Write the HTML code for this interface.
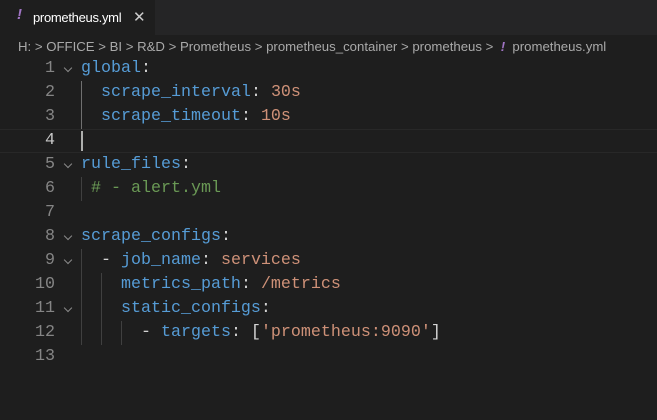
<!DOCTYPE html>
<html><head><style>
body{margin:0;width:657px;height:420px;background:#1e1e1e;overflow:hidden;font-family:"Liberation Sans",sans-serif;position:relative}
.tabbar{position:absolute;left:0;top:0;width:657px;height:35px;background:#252526}
.tab{position:absolute;left:0;top:0;width:155px;height:35px;background:#1e1e1e;color:#fff;font-size:13px}
.bc{position:absolute;left:18px;top:37px;height:20px;line-height:20px;font-size:13.2px;color:#a9a9a9;white-space:pre}
.ln{position:absolute;left:0;width:55px;text-align:right;font-family:"Liberation Mono",monospace;font-size:16.67px;color:#858585;line-height:24px;height:24px}
.code{position:absolute;left:81px;font-family:"Liberation Mono",monospace;font-size:16.67px;line-height:24px;height:24px;white-space:pre;color:#d4d4d4}
.k{color:#569cd6}.v{color:#ce9178}.c{color:#6a9955}
.f{position:absolute;left:65px;width:5px;height:5px;border-right:1px solid #8a8a8a;border-bottom:1px solid #8a8a8a;transform:rotate(45deg)}
.g{position:absolute;width:1px;background:#404040}
</style></head><body>
<div class="tabbar"><div class="tab">
<span style="position:absolute;left:17px;top:6px;color:#a074c4;font-style:italic;font-weight:bold;font-size:15px">!</span>
<span style="position:absolute;left:33px;top:10px;letter-spacing:-0.3px">prometheus.yml</span>
<span style="position:absolute;left:133px;top:8px;font-size:15px;color:#ccc">✕</span>
</div></div>
<div class="bc">H: &gt; OFFICE &gt; BI &gt; R&amp;D &gt; Prometheus &gt; prometheus_container &gt; prometheus &gt;  <span style="color:#a074c4;font-style:italic;font-weight:bold">!</span>  prometheus.yml</div>
<div style="position:absolute;left:0;top:129px;width:657px;height:22px;border-top:1px solid #282828;border-bottom:1px solid #282828"></div>
<div style="position:absolute;left:81px;top:131px;width:2px;height:20px;background:#aeafad"></div>
<div class="g" style="left:81px;top:81px;height:48px;background:#707070"></div>
<div class="g" style="left:81px;top:177px;height:24px"></div>
<div class="g" style="left:81px;top:249px;height:96px"></div>
<div class="g" style="left:101px;top:273px;height:72px"></div>
<div class="g" style="left:121px;top:321px;height:24px"></div>
<div class="ln" style="top:57px">1</div><div class="ln" style="top:81px">2</div><div class="ln" style="top:105px">3</div><div class="ln" style="top:129px;color:#c6c6c6">4</div><div class="ln" style="top:153px">5</div><div class="ln" style="top:177px">6</div><div class="ln" style="top:201px">7</div><div class="ln" style="top:225px">8</div><div class="ln" style="top:249px">9</div><div class="ln" style="top:273px">10</div><div class="ln" style="top:297px">11</div><div class="ln" style="top:321px">12</div><div class="ln" style="top:345px">13</div>
<div class="f" style="top:65px"></div><div class="f" style="top:161px"></div><div class="f" style="top:233px"></div><div class="f" style="top:257px"></div><div class="f" style="top:305px"></div>
<div class="code" style="top:57px"><span class="k">global</span>:</div>
<div class="code" style="top:81px">  <span class="k">scrape_interval</span>: <span class="v">30s</span></div>
<div class="code" style="top:105px">  <span class="k">scrape_timeout</span>: <span class="v">10s</span></div>
<div class="code" style="top:153px"><span class="k">rule_files</span>:</div>
<div class="code" style="top:177px"> <span class="c"># - alert.yml</span></div>
<div class="code" style="top:225px"><span class="k">scrape_configs</span>:</div>
<div class="code" style="top:249px">  - <span class="k">job_name</span>: <span class="v">services</span></div>
<div class="code" style="top:273px">    <span class="k">metrics_path</span>: <span class="v">/metrics</span></div>
<div class="code" style="top:297px">    <span class="k">static_configs</span>:</div>
<div class="code" style="top:321px">      - <span class="k">targets</span>: [<span class="v">'prometheus:9090'</span>]</div>
</body></html>
